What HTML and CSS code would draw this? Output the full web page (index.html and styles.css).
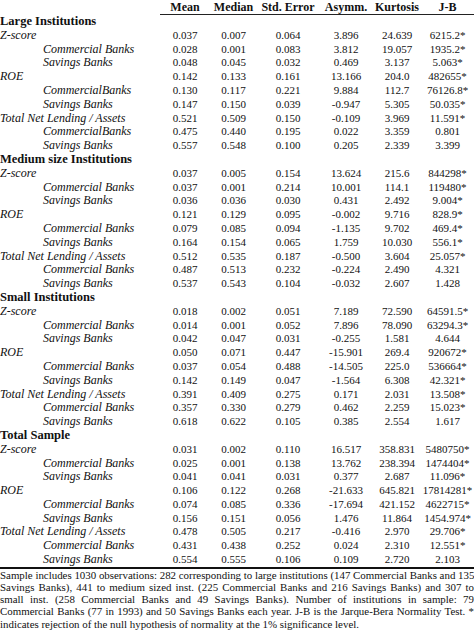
FILE: index.html
```html
<!DOCTYPE html>
<html>
<head>
<meta charset="utf-8">
<link rel="stylesheet" href="styles.css">
</head>
<body>
<div class="page">
<table class="stats">
<colgroup>
<col class="c-label"><col class="c-mean"><col class="c-median"><col class="c-se"><col class="c-asym"><col class="c-kurt"><col class="c-jb">
</colgroup>
<thead>
<tr><th class="blank"></th><th>Mean</th><th>Median</th><th>Std. Error</th><th>Asymm.</th><th>Kurtosis</th><th>J-B</th></tr>
</thead>
<tbody>
<tr class="group"><td colspan="7">Large Institutions</td></tr>
<tr class="var"><td>Z-score</td><td>0.037</td><td>0.007</td><td>0.064</td><td>3.896</td><td>24.639</td><td>6215.2*</td></tr>
<tr class="sub"><td>Commercial Banks</td><td>0.028</td><td>0.001</td><td>0.083</td><td>3.812</td><td>19.057</td><td>1935.2*</td></tr>
<tr class="sub"><td>Savings Banks</td><td>0.048</td><td>0.045</td><td>0.032</td><td>0.469</td><td>3.137</td><td>5.063*</td></tr>
<tr class="var"><td>ROE</td><td>0.142</td><td>0.133</td><td>0.161</td><td>13.166</td><td>204.0</td><td>482655*</td></tr>
<tr class="sub"><td>CommercialBanks</td><td>0.130</td><td>0.117</td><td>0.221</td><td>9.884</td><td>112.7</td><td>76126.8*</td></tr>
<tr class="sub"><td>Savings Banks</td><td>0.147</td><td>0.150</td><td>0.039</td><td>-0.947</td><td>5.305</td><td>50.035*</td></tr>
<tr class="var"><td>Total Net Lending / Assets</td><td>0.521</td><td>0.509</td><td>0.150</td><td>-0.109</td><td>3.969</td><td>11.591*</td></tr>
<tr class="sub"><td>CommercialBanks</td><td>0.475</td><td>0.440</td><td>0.195</td><td>0.022</td><td>3.359</td><td>0.801</td></tr>
<tr class="sub"><td>Savings Banks</td><td>0.557</td><td>0.548</td><td>0.100</td><td>0.205</td><td>2.339</td><td>3.399</td></tr>
<tr class="group"><td colspan="7">Medium size Institutions</td></tr>
<tr class="var"><td>Z-score</td><td>0.037</td><td>0.005</td><td>0.154</td><td>13.624</td><td>215.6</td><td>844298*</td></tr>
<tr class="sub"><td>Commercial Banks</td><td>0.037</td><td>0.001</td><td>0.214</td><td>10.001</td><td>114.1</td><td>119480*</td></tr>
<tr class="sub"><td>Savings Banks</td><td>0.036</td><td>0.036</td><td>0.030</td><td>0.431</td><td>2.492</td><td>9.004*</td></tr>
<tr class="var"><td>ROE</td><td>0.121</td><td>0.129</td><td>0.095</td><td>-0.002</td><td>9.716</td><td>828.9*</td></tr>
<tr class="sub"><td>Commercial Banks</td><td>0.079</td><td>0.085</td><td>0.094</td><td>-1.135</td><td>9.702</td><td>469.4*</td></tr>
<tr class="sub"><td>Savings Banks</td><td>0.164</td><td>0.154</td><td>0.065</td><td>1.759</td><td>10.030</td><td>556.1*</td></tr>
<tr class="var"><td>Total Net Lending / Assets</td><td>0.512</td><td>0.535</td><td>0.187</td><td>-0.500</td><td>3.604</td><td>25.057*</td></tr>
<tr class="sub"><td>Commercial Banks</td><td>0.487</td><td>0.513</td><td>0.232</td><td>-0.224</td><td>2.490</td><td>4.321</td></tr>
<tr class="sub"><td>Savings Banks</td><td>0.537</td><td>0.543</td><td>0.104</td><td>-0.032</td><td>2.607</td><td>1.428</td></tr>
<tr class="group"><td colspan="7">Small Institutions</td></tr>
<tr class="var"><td>Z-score</td><td>0.018</td><td>0.002</td><td>0.051</td><td>7.189</td><td>72.590</td><td>64591.5*</td></tr>
<tr class="sub"><td>Commercial Banks</td><td>0.014</td><td>0.001</td><td>0.052</td><td>7.896</td><td>78.090</td><td>63294.3*</td></tr>
<tr class="sub"><td>Savings Banks</td><td>0.042</td><td>0.047</td><td>0.031</td><td>-0.255</td><td>1.581</td><td>4.644</td></tr>
<tr class="var"><td>ROE</td><td>0.050</td><td>0.071</td><td>0.447</td><td>-15.901</td><td>269.4</td><td>920672*</td></tr>
<tr class="sub"><td>Commercial Banks</td><td>0.037</td><td>0.054</td><td>0.488</td><td>-14.505</td><td>225.0</td><td>536664*</td></tr>
<tr class="sub"><td>Savings Banks</td><td>0.142</td><td>0.149</td><td>0.047</td><td>-1.564</td><td>6.308</td><td>42.321*</td></tr>
<tr class="var"><td>Total Net Lending / Assets</td><td>0.391</td><td>0.409</td><td>0.275</td><td>0.171</td><td>2.031</td><td>13.508*</td></tr>
<tr class="sub"><td>Commercial Banks</td><td>0.357</td><td>0.330</td><td>0.279</td><td>0.462</td><td>2.259</td><td>15.023*</td></tr>
<tr class="sub"><td>Savings Banks</td><td>0.618</td><td>0.622</td><td>0.105</td><td>0.385</td><td>2.554</td><td>1.617</td></tr>
<tr class="group"><td colspan="7">Total Sample</td></tr>
<tr class="var"><td>Z-score</td><td>0.031</td><td>0.002</td><td>0.110</td><td>16.517</td><td>358.831</td><td>5480750*</td></tr>
<tr class="sub"><td>Commercial Banks</td><td>0.025</td><td>0.001</td><td>0.138</td><td>13.762</td><td>238.394</td><td>1474404*</td></tr>
<tr class="sub"><td>Savings Banks</td><td>0.041</td><td>0.041</td><td>0.031</td><td>0.377</td><td>2.687</td><td>11.096*</td></tr>
<tr class="var"><td>ROE</td><td>0.106</td><td>0.122</td><td>0.268</td><td>-21.633</td><td>645.821</td><td>17814281*</td></tr>
<tr class="sub"><td>Commercial Banks</td><td>0.074</td><td>0.085</td><td>0.336</td><td>-17.694</td><td>421.152</td><td>4622715*</td></tr>
<tr class="sub"><td>Savings Banks</td><td>0.156</td><td>0.151</td><td>0.056</td><td>1.476</td><td>11.864</td><td>1454.974*</td></tr>
<tr class="var"><td>Total Net Lending / Assets</td><td>0.478</td><td>0.505</td><td>0.217</td><td>-0.416</td><td>2.970</td><td>29.706*</td></tr>
<tr class="sub"><td>Commercial Banks</td><td>0.431</td><td>0.438</td><td>0.252</td><td>0.024</td><td>2.310</td><td>12.551*</td></tr>
<tr class="sub"><td>Savings Banks</td><td>0.554</td><td>0.555</td><td>0.106</td><td>0.109</td><td>2.720</td><td>2.103</td></tr>
</tbody>
</table>
<div class="note">
<span class="line">Sample includes 1030 observations: 282 corresponding to large institutions (147 Commercial Banks and 135</span>
<span class="line">Savings Banks), 441 to medium sized inst. (225 Commercial Banks and 216 Savings Banks) and 307 to</span>
<span class="line">small inst. (258 Commercial Banks and 49 Savings Banks). Number of institutions in sample: 79</span>
<span class="line">Commercial Banks (77 in 1993) and 50 Savings Banks each year. J-B is the Jarque-Bera Normality Test. *</span>
<span class="line last">indicates rejection of the null hypothesis of normality at the 1% significance level.</span>
</div>
</div>
</body>
</html>
```

FILE: styles.css
```css
html, body {
  margin: 0;
  padding: 0;
  background: #fff;
}
body {
  width: 474px;
  height: 632px;
  overflow: hidden;
  font-family: "Liberation Serif", "Times New Roman", serif;
  color: #111;
}
.page {
  width: 474px;
}
.stats {
  width: 474px;
  table-layout: fixed;
  border-collapse: collapse;
  border-spacing: 0;
}
.c-label { width: 160px; }
.c-mean { width: 50px; }
.c-median { width: 47px; }
.c-se { width: 62px; }
.c-asym { width: 54px; }
.c-kurt { width: 48px; }
.c-jb { width: 53px; }

.stats th, .stats td {
  padding: 0;
  height: 13.8px;
  line-height: 13.8px;
  white-space: nowrap;
  text-align: center;
  font-size: 11px;
  overflow: visible;
}
.stats thead th {
  font-weight: bold;
  font-size: 12px;
  height: 14px;
  line-height: 14px;
  border-bottom: 1px solid #222;
}
.stats thead th.blank {
  border-bottom: none;
}
.stats tr.group td {
  text-align: left;
  font-weight: bold;
  font-size: 12.5px;
}
.stats tr.var td:first-child,
.stats tr.sub td:first-child {
  text-align: left;
  font-style: italic;
  font-size: 12px;
}
.stats tr.sub td:first-child {
  padding-left: 43px;
}
.note {
  width: 474px;
  border-top: 2px solid #111;
  font-size: 10.9px;
  line-height: 12.2px;
  padding-top: 0;
}
.note .line {
  display: block;
  text-align: justify;
  text-align-last: justify;
  white-space: nowrap;
}
.note .line.last {
  text-align-last: left;
}
```
